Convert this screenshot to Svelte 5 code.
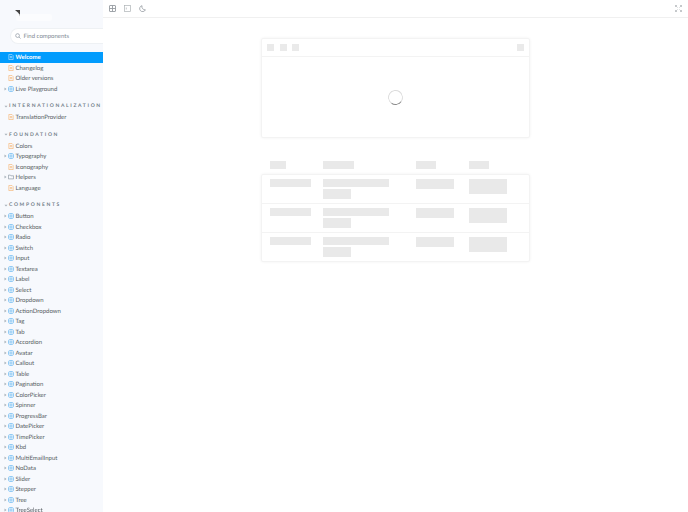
<script>
  const top = [
    { name: 'Welcome', kind: 'doc', selected: true },
    { name: 'Changelog', kind: 'doc' },
    { name: 'Older versions', kind: 'doc' },
    { name: 'Live Playground', kind: 'comp', caret: true }
  ];
  const groups = [
    { title: 'Internationalization', items: [{ name: 'TranslationProvider', kind: 'doc' }] },
    {
      title: 'Foundation',
      items: [
        { name: 'Colors', kind: 'doc' },
        { name: 'Typography', kind: 'comp', caret: true },
        { name: 'Iconography', kind: 'doc' },
        { name: 'Helpers', kind: 'folder', caret: true },
        { name: 'Language', kind: 'doc' }
      ]
    },
    {
      title: 'Components',
      items: ['Button','Checkbox','Radio','Switch','Input','Textarea','Label','Select','Dropdown','ActionDropdown','Tag','Tab','Accordion','Avatar','Callout','Table','Pagination','ColorPicker','Spinner','ProgressBar','DatePicker','TimePicker','Kbd','MultiEmailInput','NoData','Slider','Stepper','Tree','TreeSelect'].map((name) => ({ name, kind: 'comp', caret: true }))
    }
  ];
  const rows = [0, 1, 2];
</script>

{#snippet row(item)}
  <div class="row" class:selected={item.selected}>
    <span class="caret">{#if item.caret}<svg width="3" height="4" viewBox="0 0 3 4"><path d="M0.5 0.5 2.5 2 0.5 3.5z" fill="#a8b1b9" /></svg>{/if}</span>
    {#if item.kind === 'doc'}
      <svg class="ico" viewBox="0 0 7 7" fill="none" stroke={item.selected ? '#cfeaff' : '#f6ac62'} stroke-width="0.7">
        <path d="M1 .5h3.6L6 1.900v4.600H1z" /><path d="M2.200 3h2.600M2.200 4.300h2.600" />
      </svg>
    {:else if item.kind === 'comp'}
      <svg class="ico" viewBox="0 0 7 7" fill="none" stroke="#5bb2f0" stroke-width="0.7">
        <rect x=".6" y=".6" width="5.800" height="5.800" rx="1.800" /><path d="M3.500.6v5.800M.6 3.500h5.800" />
      </svg>
    {:else}
      <svg class="ico" viewBox="0 0 7 7" fill="none" stroke="#7c8a96" stroke-width="0.7">
        <path d="M.5 1.300h2.200l.7.8h3.100v3.600H.5z" />
      </svg>
    {/if}
    <span class="label">{item.name}</span>
  </div>
{/snippet}

{#snippet bar(cls)}<i class="sk {cls}"></i>{/snippet}

<div class="page">
  <aside class="side">
    <div class="brand">
      <svg class="mark" width="6" height="7" viewBox="0 0 6 7"><path d="M0 0h5v6.500L3.500 3z" fill="#444" /></svg>
      <i class="logo"></i>
    </div>
    <div class="search">
      <svg width="6" height="6" viewBox="0 0 7 7" fill="none" stroke="#8a949e" stroke-width="0.8"><circle cx="3" cy="3" r="2.200" /><path d="M4.700 4.700 6.500 6.500" /></svg>
      <span>Find components</span>
    </div>
    <nav class="tree">
      {#each top as item}{@render row(item)}{/each}
      {#each groups as g}
        <div class="head">
          <svg width="4" height="3" viewBox="0 0 4 3"><path d="M.5.800h3L2 2.400z" fill="#a8b1b9" /></svg>
          <span>{g.title}</span>
        </div>
        {#each g.items as item}{@render row(item)}{/each}
      {/each}
    </nav>
  </aside>

  <main class="main">
    <header class="bar">
      <div class="tools">
        <svg class="tool" viewBox="0 0 7 7" fill="none" stroke="#969ca1" stroke-width="0.9"><rect x=".5" y=".5" width="6" height="6" rx=".5" /><path d="M3.500.5v6M.5 3.500h6" /></svg>
        <svg class="tool" viewBox="0 0 7 7" fill="none" stroke="#adb2b6" stroke-width="0.7"><rect x=".5" y=".5" width="6" height="6" /><path d="M2.300 2.500v2" /></svg>
        <svg class="tool" viewBox="0 0 7 7" fill="none" stroke="#969ca1" stroke-width="0.8"><path d="M3 .7A3 3 0 1 0 6.400 4.800 3.200 3.200 0 0 1 3 .7z" /></svg>
      </div>
      <svg class="tool" viewBox="0 0 7 7" fill="none" stroke="#adb2b6" stroke-width="0.7"><path d="M.5.5l2 2M.5.5h1.500M.5.5V2M6.500.5l-2 2M6.500.5H5M6.500.5V2M.5 6.500l2-2M.5 6.500H2M.5 6.500V5M6.500 6.500l-2-2M6.500 6.500H5M6.500 6.500V5" /></svg>
    </header>
    <div class="canvas">
      <section class="preview card">
        <div class="pbar">
          <div class="pleft"><i class="sq"></i><i class="sq"></i><i class="sq"></i></div>
          <i class="sq"></i>
        </div>
        <div class="pbody"><div class="spin"></div></div>
      </section>

      <section class="props">
        <div class="grid thead">
          <div>{@render bar('h1')}</div>
          <div>{@render bar('h2')}</div>
          <div>{@render bar('h3')}</div>
          <div>{@render bar('h3')}</div>
        </div>
        <div class="card tbody">
          {#each rows as r}
            <div class="grid trow">
              <div>{@render bar('c1')}</div>
              <div class="stack">{@render bar('c2')}{@render bar('c2b')}</div>
              <div>{@render bar('c3')}</div>
              <div>{@render bar('c4')}</div>
            </div>
          {/each}
        </div>
      </section>
    </div>
  </main>
</div>

<style>
  :global(body) { margin: 0; background: #fff; }
  .page { display: flex; width: 688px; height: 512px; overflow: hidden; font-family: Lato, "Open Sans", sans-serif; text-rendering: geometricPrecision; filter: blur(0.35px); }
  .side { width: 103px; flex: none; background: #f7f9fd; display: flex; flex-direction: column; }
  .brand { height: 28px; padding: 10px 0 0 15px; box-sizing: border-box; flex: none; display: flex; gap: 1px; }
  .mark { display: block; flex: none; }
  .logo { display: block; width: 36px; height: 7px; margin-top: 4px; margin-left: -6px; background: rgba(255, 255, 255, 0.5); border-radius: 2px; }
  .search { margin-left: 10px; height: 16px; flex: none; background: #fff; border: 1px solid #eef1f4; border-right: 0; border-radius: 8px 0 0 8px; display: flex; align-items: center; gap: 2.500px; padding-left: 4px; box-sizing: border-box; font-size: 6px; color: #808a94; }
  .search span { padding-top: 0.500px; }
  .tree { margin-top: 8px; display: flex; flex-direction: column; }
  .row { height: 10.500px; flex: none; display: flex; align-items: center; font-size: 6px; color: #565c62; }
  .row.selected { background: #029cfd; color: #fff; font-weight: 700; }
  .caret { width: 8px; padding-left: 4px; box-sizing: border-box; display: flex; align-items: center; flex: none; }
  .ico { width: 6px; height: 6px; margin-right: 1.500px; flex: none; }
  .label { white-space: nowrap; padding-top: 1px; }
  .head { height: 12px; margin-top: 6px; padding-left: 4px; display: flex; align-items: center; gap: 1px; font-size: 5px; font-weight: 700; letter-spacing: 1.650px; text-transform: uppercase; color: #727d87; white-space: nowrap; }
  .head svg { flex: none; }
  .main { flex: 1; min-width: 0; display: flex; flex-direction: column; }
  .bar { height: 18px; flex: none; box-sizing: border-box; border-bottom: 1px solid #f0f0f0; display: flex; align-items: center; justify-content: space-between; padding: 0 6px; }
  .tools { display: flex; gap: 8px; }
  .tool { width: 7px; height: 7px; display: block; }
  .canvas { padding: 20px 0 0 158px; width: 269px; }
  .card { background: #fff; border: 1px solid #f3f3f3; border-radius: 2px; box-shadow: 0 0 3px rgba(0, 0, 0, 0.06); }
  .preview { height: 100px; box-sizing: border-box; display: flex; flex-direction: column; }
  .pbar { height: 17px; flex: none; border-bottom: 1px solid #f3f3f3; display: flex; justify-content: space-between; align-items: center; padding: 0 5px; }
  .pleft { display: flex; gap: 5.500px; }
  .sq { display: block; width: 7px; height: 6.500px; background: #eaeaea; }
  .pbody { flex: 1; display: flex; align-items: center; justify-content: center; }
  .spin { width: 15px; height: 15px; box-sizing: border-box; border-radius: 50%; border: 1px solid #dcdcdc; border-top-color: #8a8a8a; transform: rotate(170deg); }
  .props { margin-top: 23px; }
  .grid { display: grid; grid-template-columns: 52.500px 93.500px 53px 1fr; padding-left: 9px; }
  .thead { height: 13px; }
  .sk { display: block; background: #e9e9e9; }
  .h1 { width: 16px; height: 8px; }
  .h2 { width: 31px; height: 8px; }
  .h3 { width: 20px; height: 8px; }
  .tbody { box-sizing: border-box; height: 88px; display: flex; flex-direction: column; }
  .trow { height: 29px; flex: none; box-sizing: border-box; padding-top: 4px; padding-left: 8px; border-bottom: 1px solid #f3f3f3; }
  .trow:last-child { border-bottom: 0; }
  .stack { display: flex; flex-direction: column; gap: 2px; }
  .c1 { width: 41px; height: 8px; }
  .c2 { width: 66.500px; height: 8px; }
  .c2b { width: 28.500px; height: 9.500px; }
  .c3 { width: 38px; height: 9.500px; }
  .c4 { width: 38px; height: 14.500px; }
</style>
